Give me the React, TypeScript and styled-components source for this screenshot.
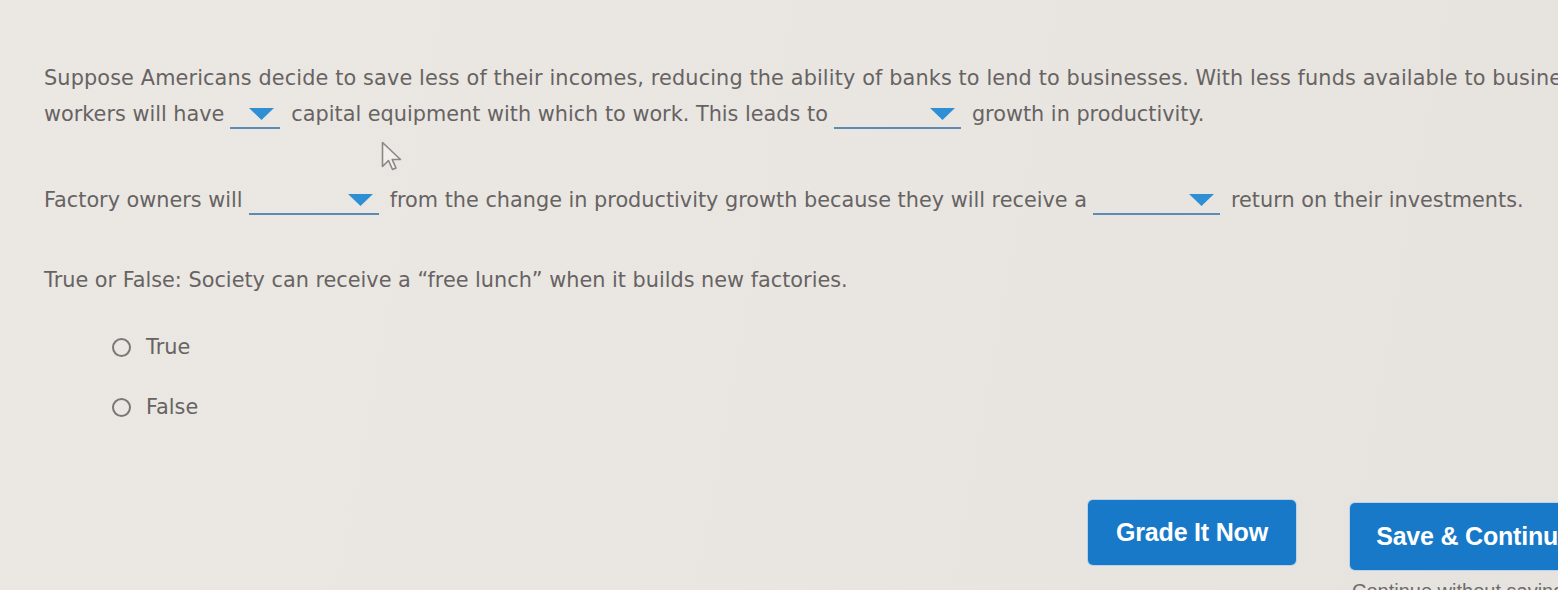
import { createGlobalStyle, styled } from "styled-components";

const GlobalStyle = createGlobalStyle`
  html, body {
    margin: 0;
    padding: 0;
    overflow: hidden;
    background: #e9e6e1;
  }
`;

const textColor = "#676363";
const linkBlue = "#5d8bb8";
const arrowBlue = "#2f8fd5";
const buttonBlue = "#1779c8";

const Page = styled.div`
  position: relative;
  width: 1620px;
  height: 590px;
  box-sizing: border-box;
  padding: 60px 0 0 44px;
  background: linear-gradient(100deg, #ebe8e3 0%, #e9e6e1 55%, #e6e3de 100%);
  font-family: "DejaVu Sans", Verdana, sans-serif;
  font-size: 20.8px;
  color: ${textColor};
`;

const Paragraph = styled.div<{ $gap: number }>`
  margin-top: ${({ $gap }) => $gap}px;
`;

const Line = styled.div<{ $spread?: number }>`
  white-space: nowrap;
  line-height: 36px;
  height: 36px;
  letter-spacing: ${({ $spread = 0 }) => $spread}px;
`;

const Blank = styled.span<{ $width: number }>`
  position: relative;
  display: inline-block;
  vertical-align: -8px;
  width: ${({ $width }) => $width}px;
  height: 26px;
  margin: 0 11px 0 6px;
  border-bottom: 2px solid ${linkBlue};
`;

const Caret = styled.svg`
  position: absolute;
  right: 6px;
  top: 7px;
`;

const RadioList = styled.div`
  display: flex;
  flex-direction: column;
  gap: 24px;
  margin-top: 31px;
  padding-left: 68px;
`;

const RadioRow = styled.label`
  display: flex;
  align-items: center;
  gap: 15px;
  height: 36px;
  line-height: 36px;
`;

const RadioCircle = styled.span`
  display: inline-block;
  width: 15px;
  height: 15px;
  border: 2px solid #7b7777;
  border-radius: 50%;
`;

const ButtonRow = styled.div`
  display: flex;
  justify-content: flex-end;
  align-items: flex-start;
  gap: 54px;
  margin-top: 75px;
  padding-right: 22px;
`;

const ButtonColumn = styled.div`
  display: flex;
  flex-direction: column;
  align-items: flex-start;
  gap: 10px;
`;

const ActionButton = styled.button<{ $width: number; $height: number; $drop: number }>`
  width: ${({ $width }) => $width}px;
  height: ${({ $height }) => $height}px;
  margin-top: ${({ $drop }) => $drop}px;
  background: ${buttonBlue};
  color: #ffffff;
  border: none;
  border-radius: 5px;
  box-shadow: 0 0 0 1px #b8d3ea;
  font-family: "Liberation Sans", Arial, sans-serif;
  font-weight: 700;
  font-size: 25px;
  letter-spacing: -0.2px;
  cursor: pointer;
`;

const SubNote = styled.span`
  padding-left: 2px;
  font-family: "Liberation Sans", Arial, sans-serif;
  font-size: 20px;
  color: #6f6b6b;
  white-space: nowrap;
`;

const Pointer = styled.svg`
  position: absolute;
  left: 381px;
  top: 141px;
`;

function Dropdown({ width }: { width: number }) {
  return (
    <Blank $width={width}>
      <Caret width="25" height="12" viewBox="0 0 25 12">
        <polygon points="0,0 25,0 12.5,12" fill={arrowBlue} />
      </Caret>
    </Blank>
  );
}

function Radio({ label }: { label: string }) {
  return (
    <RadioRow>
      <RadioCircle />
      {label}
    </RadioRow>
  );
}

export default function App() {
  return (
    <>
      <GlobalStyle />
      <Page>
        <Paragraph $gap={0}>
          <Line $spread={0.13}>
            Suppose Americans decide to save less of their incomes, reducing the ability of banks to lend to
            businesses. With less funds available to businesses,
          </Line>
          <Line>
            workers will have
            <Dropdown width={50} />
            capital equipment with which to work. This leads to
            <Dropdown width={127} />
            growth in productivity.
          </Line>
        </Paragraph>

        <Paragraph $gap={50}>
          <Line>
            Factory owners will
            <Dropdown width={130} />
            from the change in productivity growth because they will receive a
            <Dropdown width={127} />
            return on their investments.
          </Line>
        </Paragraph>

        <Paragraph $gap={44}>
          <Line>True or False: Society can receive a “free lunch” when it builds new factories.</Line>
        </Paragraph>

        <RadioList>
          <Radio label="True" />
          <Radio label="False" />
        </RadioList>

        <ButtonRow>
          <ActionButton $width={208} $height={65} $drop={0}>
            Grade It Now
          </ActionButton>
          <ButtonColumn>
            <ActionButton $width={248} $height={67} $drop={3}>
              Save &amp; Continue
            </ActionButton>
            <SubNote>Continue without saving</SubNote>
          </ButtonColumn>
        </ButtonRow>

        <Pointer width="22" height="32" viewBox="0 0 22 32">
          <path
            d="M1.5 1.5 L1.5 25.5 L7.5 19.5 L11.5 28.5 L15 27 L11.2 18.5 L19.5 18.5 Z"
            fill="#f1efeb"
            stroke="#8a8686"
            strokeWidth="1.6"
            strokeLinejoin="round"
          />
        </Pointer>
      </Page>
    </>
  );
}
